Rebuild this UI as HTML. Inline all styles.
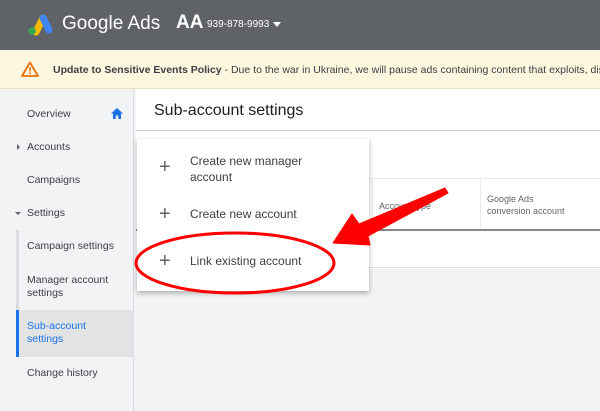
<!DOCTYPE html>
<html><head><style>
body{margin:0;width:600px;height:411px;overflow:hidden;font-family:"Liberation Sans",Arial,sans-serif;background:#f1f3f4;position:relative}
.abs{position:absolute}
.hdr{left:0;top:0;width:600px;height:50px;background:#5f6368}
.ban{left:0;top:51px;width:600px;height:37px;background:#fef7e0;border-bottom:1px solid #e8e0c0}
.side{left:0;top:89px;width:133px;height:322px;background:#f1f3f4;border-right:1px solid #dadce0}
.si{position:absolute;left:27px;font-size:10.5px;color:#3c4043;line-height:13px}
.main{left:136px;top:89px;width:464px;height:180px;background:#fff}
.mi{position:absolute;left:53px;font-size:12px;color:#3c4043;line-height:16px}
.plus{position:absolute;left:22px;font-size:20px;color:#5f6368;font-weight:300}
</style></head><body>
<div class="abs hdr"></div>
<svg class="abs" style="left:27px;top:12px" width="26" height="24" viewBox="0 0 26 24">
<path d="M9 20 L16 6" stroke="#fbbc04" stroke-width="7" stroke-linecap="round"/>
<path d="M16 6 L22 18" stroke="#4285f4" stroke-width="7" stroke-linecap="round"/>
<circle cx="5" cy="19" r="3.8" fill="#34a853"/></svg>
<div class="abs" style="left:62px;top:13px;font-size:19px;color:#fff">Google Ads</div>
<div class="abs" style="left:176px;top:12px;font-size:19px;color:#fff;font-weight:bold">AA</div>
<div class="abs" style="left:207px;top:19px;font-size:10px;color:#fff">939-878-9993</div>
<div class="abs" style="left:273px;top:22px;width:0;height:0;border-left:4.5px solid transparent;border-right:4.5px solid transparent;border-top:5px solid #fff"></div>
<div class="abs ban"></div>
<svg class="abs" style="left:21px;top:61px" width="18" height="16" viewBox="0 0 18 16"><path d="M9 1.5 L17 15 H1 Z" fill="none" stroke="#e8710a" stroke-width="1.8" stroke-linejoin="round"/><rect x="8.2" y="6" width="1.6" height="4.5" fill="#e8710a"/><rect x="8.2" y="11.5" width="1.6" height="1.6" fill="#e8710a"/></svg>
<div class="abs" style="left:53px;top:64px;font-size:10.5px;color:#3c4043;white-space:nowrap"><b style="font-weight:600">Update to Sensitive Events Policy</b> - Due to the war in Ukraine, we will pause ads containing content that exploits, dis</div>
<div class="abs side">
<div class="si" style="top:19px">Overview</div>
<svg style="position:absolute;left:111px;top:19px" width="12" height="11" viewBox="0 0 12 11"><path d="M6 0 L12 5.5 H10 V11 H7.3 V7.5 H4.7 V11 H2 V5.5 H0 Z" fill="#1a73e8"/></svg>
<div style="position:absolute;left:17px;top:55px;border-top:3px solid transparent;border-bottom:3px solid transparent;border-left:3px solid #5f6368"></div>
<div class="si" style="top:52px">Accounts</div>
<div class="si" style="top:85px">Campaigns</div>
<div style="position:absolute;left:15px;top:123px;border-left:3px solid transparent;border-right:3px solid transparent;border-top:3px solid #5f6368"></div>
<div class="si" style="top:118px">Settings</div>
<div style="position:absolute;left:16px;top:141px;width:3px;height:80px;background:#dadce0"></div>
<div class="si" style="top:151px">Campaign settings</div>
<div class="si" style="top:185px">Manager account<br>settings</div>
<div style="position:absolute;left:16px;top:221px;width:117px;height:47px;background:#e2e3e5"></div>
<div style="position:absolute;left:16px;top:221px;width:3px;height:47px;background:#1a73e8"></div>
<div class="si" style="top:231px;color:#1a73e8">Sub-account<br>settings</div>
<div class="si" style="top:278px">Change history</div>
</div>
<div class="abs main">
<div style="position:absolute;left:18px;top:13px;font-size:16px;color:#202124">Sub-account settings</div>
<div style="position:absolute;left:0;top:41px;width:464px;height:1px;background:#c8c8c8"></div>
<div style="position:absolute;left:0;top:89px;width:464px;height:50px;background:#fff;border-top:1px solid #e8eaed;border-bottom:2px solid #888"></div>
<div style="position:absolute;left:236px;top:90px;width:1px;height:50px;background:#e8eaed"></div>
<div style="position:absolute;left:344px;top:90px;width:1px;height:50px;background:#e8eaed"></div>
<div style="position:absolute;left:243px;top:112px;font-size:9px;color:#5f6368">Account type</div>
<div style="position:absolute;left:351px;top:104px;font-size:9px;color:#5f6368;line-height:12px">Google Ads<br>conversion account</div>
<div style="position:absolute;left:0;top:178px;width:464px;height:1px;background:#e0e0e0"></div>
</div>
<div class="abs" style="left:137px;top:139px;width:232px;height:152px;background:#fff;box-shadow:0 2px 5px rgba(0,0,0,.3)">
<div class="plus" style="top:17px">+</div><div class="mi" style="top:14px">Create new manager<br>account</div>
<div class="plus" style="top:64px">+</div><div class="mi" style="top:67px">Create new account</div>
<div class="plus" style="top:111px">+</div><div class="mi" style="top:114px">Link existing account</div>
</div>
<svg class="abs" style="left:0;top:0" width="600" height="411">
<ellipse cx="235" cy="263" rx="99" ry="30" fill="none" stroke="#f00" stroke-width="3"/>
<path d="M333 243 L352 214 L359 224 L445 188 L448 193 L368 236 L370 245 Z" fill="#f00" stroke="#f00" stroke-width="1" stroke-linejoin="round"/>
</svg>
</body></html>
